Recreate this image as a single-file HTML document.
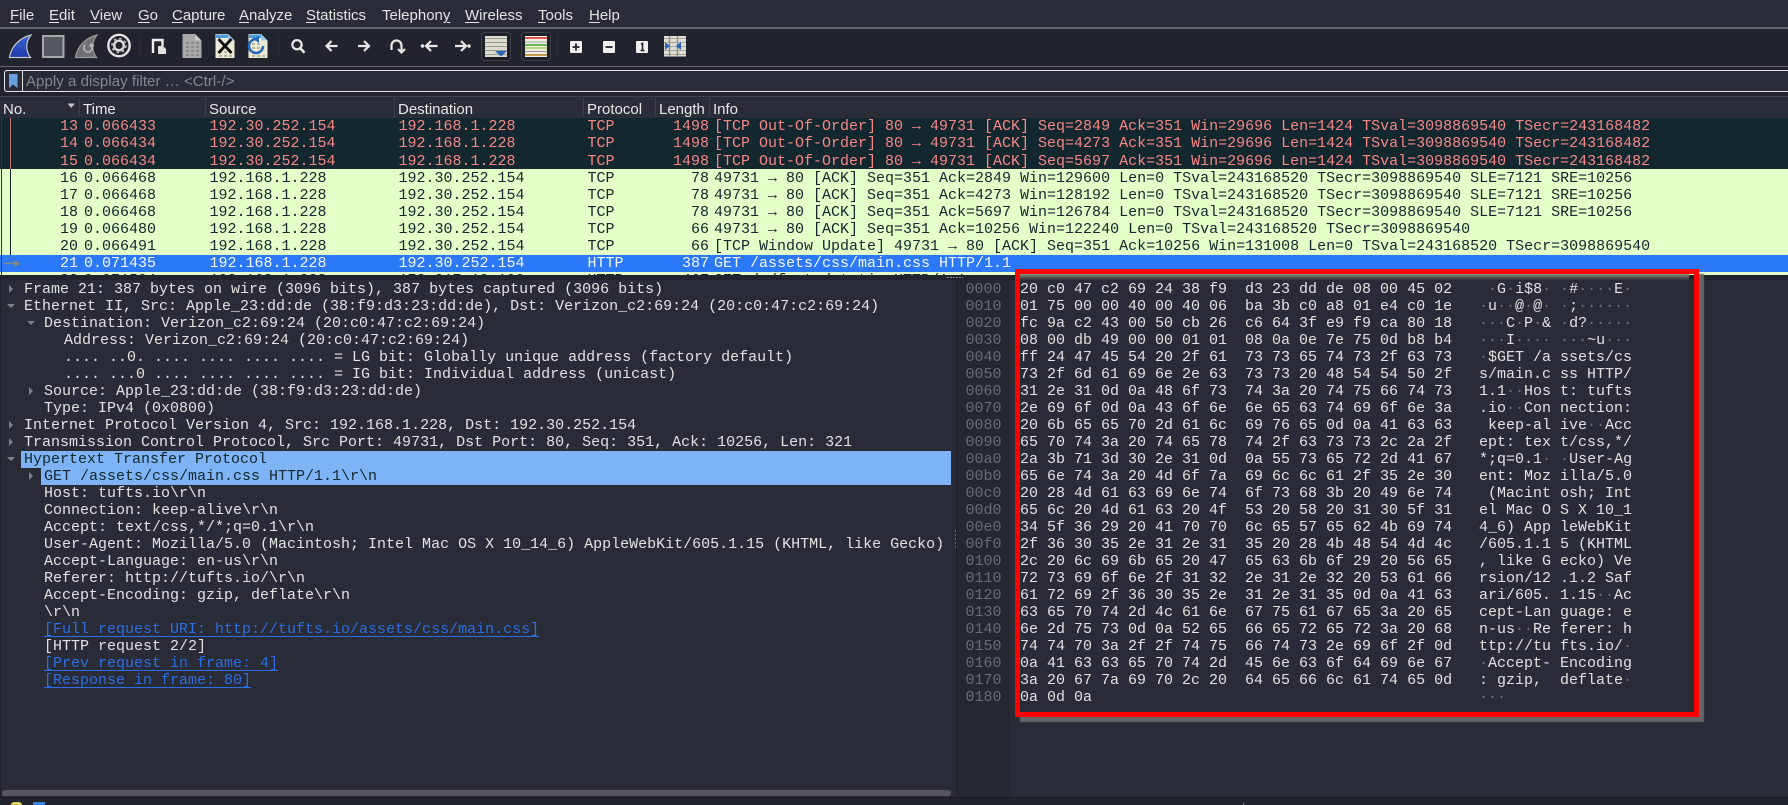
<!DOCTYPE html>
<html><head><meta charset="utf-8"><title>Wireshark</title>
<style>
html{margin:0;padding:0;width:1788px;height:805px;overflow:hidden;background:#292c36;}
body{margin:0;padding:0;background:#292c36;position:relative;width:1788px;height:805px;overflow:hidden;font-family:"Liberation Sans",sans-serif;font-size:15px;color:#e6e6e6;}
#root{position:absolute;left:0;top:0;width:1788px;height:805px;overflow:hidden;}
.a{position:absolute;}
.m{position:absolute;top:7px;line-height:18px;color:#e4e4e4;white-space:pre;}
.m u{text-decoration-thickness:1px;text-underline-offset:2px;}
.h{position:absolute;top:100px;line-height:20px;color:#e8e8e8;white-space:pre;}
.hs{position:absolute;top:98px;width:1px;height:19px;background:#3e414c;}
.r{position:absolute;left:0;width:1788px;height:17px;line-height:17px;font-family:"Liberation Mono",monospace;font-size:15px;white-space:pre;overflow:hidden;}
.r span{position:absolute;top:0;}
.r.o1 span{top:1px;}
.n{right:1710px;text-align:right;}
.t{left:84px;}.s{left:209.5px;}.d{left:398.5px;}.p{left:587.5px;}
.l{right:1079px;text-align:right;}
.i{left:714px;}
.bad{background:#12272e;color:#f78787;}
.ok{background:#e4ffc7;color:#12272e;}
.sel{background:#2b78f8;color:#f4f8ff;}
.tr{position:absolute;left:0;width:951px;height:18px;line-height:17px;font-family:"Liberation Mono",monospace;font-size:15px;white-space:pre;overflow:hidden;color:#e2e2e2;}
.tr b{font-weight:normal;position:absolute;top:1px;}
.l0{left:24px;}.l1{left:44px;}.l2{left:64px;}
.tri{position:absolute;width:0;height:0;}
.rt{top:5px;border-left:4px solid #7d8088;border-top:4px solid transparent;border-bottom:4px solid transparent;}
.dn{top:7px;border-top:4px solid #7d8088;border-left:4px solid transparent;border-right:4px solid transparent;}
.tr b.lk{color:#2c6ee6;border-bottom:1px solid #2c6ee6;height:15px;line-height:17px;}
pre{margin:0;font-family:"Liberation Mono",monospace;font-size:15px;line-height:17px;position:absolute;}
#asc i{font-style:normal;color:#6f727a;}
</style></head><body><div id="root">

<!-- menu -->
<div class="a" style="left:0;top:0;width:1788px;height:28px;background:#292c36;"></div>
<div class="m" style="left:10px"><u>F</u>ile</div>
<div class="m" style="left:49px"><u>E</u>dit</div>
<div class="m" style="left:90px"><u>V</u>iew</div>
<div class="m" style="left:138px"><u>G</u>o</div>
<div class="m" style="left:172px"><u>C</u>apture</div>
<div class="m" style="left:239px"><u>A</u>nalyze</div>
<div class="m" style="left:306px"><u>S</u>tatistics</div>
<div class="m" style="left:382px">Telephon<u>y</u></div>
<div class="m" style="left:465px"><u>W</u>ireless</div>
<div class="m" style="left:538px"><u>T</u>ools</div>
<div class="m" style="left:589px"><u>H</u>elp</div>

<!-- toolbar -->
<div class="a" style="left:0;top:27px;width:1788px;height:2px;background:#63656f;"></div>
<div class="a" style="left:0;top:29px;width:1788px;height:37px;background:#21242c;"></div>
<div class="a" style="left:0;top:66px;width:1788px;height:1px;background:#63656f;"></div>
<svg class="a" style="left:0;top:0" width="720" height="70" viewBox="0 0 720 70">
<defs><linearGradient id="bf" x1="0" y1="0" x2="0" y2="1"><stop offset="0" stop-color="#3f66d8"/><stop offset="1" stop-color="#1d3aa8"/></linearGradient></defs>
<path d="M9.5 57.5C11 47 19 38 31 35C26 41 25 50 30.5 57.5Z" fill="url(#bf)" stroke="#c8c8c8" stroke-width="1.2"/>
<rect x="43" y="36" width="20.5" height="21" fill="#55585f" stroke="#a8a8a8" stroke-width="2"/>
<path d="M75.5 57.5C77 47 85 38 97 35C92 41 91 50 96.5 57.5Z" fill="#6e7076" stroke="#9a9a9a" stroke-width="1.2"/>
<path d="M85 45c-2 3-1 7 3 7s5-4 3-7M90 47l1-3 3 2" fill="none" stroke="#b8b8b8" stroke-width="1.6"/>
<circle cx="119" cy="45.5" r="10.7" fill="none" stroke="#e2e2e2" stroke-width="2.4"/>
<circle cx="119" cy="45.5" r="4.8" fill="none" stroke="#dcdcdc" stroke-width="2.4"/>
<circle cx="119" cy="45.5" r="7" fill="none" stroke="#c8c8c8" stroke-width="1.6" stroke-dasharray="2.4 3.1"/>
<rect x="140" y="34" width="1" height="24" fill="#2c2f38"/>
<path d="M153 53V40H162.5V46" fill="none" stroke="#f0f0f0" stroke-width="2.4"/>
<path d="M158 46H163L166 49V54H158Z" fill="#e2e2e2"/>
<path d="M182.5 34H195L201.5 40.5V58H182.5Z" fill="#a9a9a9"/>
<path d="M195 34V40.5H201.5" fill="#c8c8c8"/>
<path d="M186 43h3m2 0h3m2 0h3M186 47h3m2 0h3m2 0h3M186 51h3m2 0h3m2 0h3M186 55h3m2 0h3m2 0h3" stroke="#8a8a8a" stroke-width="2"/>
<path d="M215.5 34H228L234.5 40.5V58H215.5Z" fill="#ecead8"/>
<path d="M216 34.5H228L230 38H216Z" fill="#4d9bd8"/>
<path d="M228 34V40.5H234.5Z" fill="#9cc8e8"/>
<path d="M219 52h3m2 0h3m2 0h3M219 56h3m2 0h3m2 0h3" stroke="#a8a890" stroke-width="1.6"/>
<path d="M218.5 39L231.5 53M231.5 39L218.5 53" stroke="#111" stroke-width="2.8"/>
<path d="M248.5 34H261L267.5 40.5V58H248.5Z" fill="#ecead8"/>
<path d="M249 34.5H261L263 38H249Z" fill="#4d9bd8"/>
<path d="M261 34V40.5H267.5Z" fill="#9cc8e8"/>
<path d="M252 44h3m2 0h3M252 48h3m2 0h3M252 52h3m2 0h3M252 56h3m2 0h3m2 0h3" stroke="#a8a890" stroke-width="1.6"/>
<path d="M256 39a7 7 0 1 0 7 7" fill="none" stroke="#2a68b8" stroke-width="2.6"/>
<path d="M253 39l6-3v7z" fill="#2a68b8"/>
<rect x="278" y="34" width="1" height="24" fill="#2c2f38"/>
<g fill="none" stroke="#e8e8e8" stroke-width="2.2">
<circle cx="297" cy="44.7" r="4.6"/><path d="M300.5 48.5L304.5 52.8" stroke-width="2.6"/>
<path d="M331.5 41l-5 5 5 5M326.5 46h11"/>
<path d="M364 41l5 5-5 5M358 46h11"/>
<path d="M391.5 50V45.5a5 5 0 0 1 10 0V52M398 49l3.5 3.5 3.5-3.5"/>
<path d="M431 41l-5 5 5 5M426 46h11.5"/>
<path d="M461 41l5 5-5 5M455 46h11"/>
</g>
<circle cx="422.5" cy="46" r="1.8" fill="#e8e8e8"/><circle cx="469" cy="46" r="1.8" fill="#e8e8e8"/>
<rect x="481.5" y="32.5" width="29" height="28" rx="3" fill="#1e2128" stroke="#3b3e49"/>
<rect x="485" y="36" width="22" height="21" fill="#dcdcd2"/>
<path d="M485 38.5h22M485 42.5h22M485 46.5h22M485 50.5h22M485 54.5h22" stroke="#9a9a92" stroke-width="1"/>
<path d="M495 51h12l-6 5.5Z" fill="#2f63b8"/>
<rect x="521.5" y="32.5" width="29" height="28" rx="3" fill="#1e2128" stroke="#3b3e49"/>
<rect x="525" y="36" width="22" height="21" fill="#efefe6"/>
<path d="M525 38h22" stroke="#e02020" stroke-width="1.4"/><path d="M525 42h22" stroke="#a8a8a8" stroke-width="1"/>
<path d="M525 45h22" stroke="#3aa828" stroke-width="1.4"/><path d="M525 48h22" stroke="#88c020" stroke-width="1"/>
<path d="M525 51.5h22" stroke="#9a9a9a" stroke-width="1"/><path d="M525 55h22" stroke="#b88420" stroke-width="1.4"/>
<rect x="557" y="34" width="1" height="24" fill="#2c2f38"/>
<rect x="570" y="41" width="12" height="12" rx="1" fill="#f0f0f0"/><path d="M572.5 47h7M576 43.5v7" stroke="#21242c" stroke-width="1.8"/>
<rect x="603" y="41" width="12" height="12" rx="1" fill="#f0f0f0"/><path d="M605.5 47h7" stroke="#21242c" stroke-width="1.8"/>
<rect x="636" y="41" width="12" height="12" rx="1" fill="#f0f0f0"/><path d="M641 44.5l1.5-1V50.5M640.5 50.5h4" fill="none" stroke="#21242c" stroke-width="1.6"/>
<rect x="664" y="36" width="22" height="20.5" fill="#dfdfd6"/>
<path d="M664 38.5h22M664 42.5h22M664 46.5h22M664 50.5h22M664 54.5h22" stroke="#a8a8a0" stroke-width="1"/>
<path d="M669.5 36v21M677.5 36v21" stroke="#8a8a8a" stroke-width="1.4"/>
<path d="M665 42v8l5-4ZM681 42v8l-5-4Z" fill="#2f63b8"/>
</svg>

<!-- filter -->
<div class="a" style="left:0;top:67px;width:1788px;height:31px;background:#21242c;"></div>
<div class="a" style="left:4px;top:70px;width:1790px;height:20px;border:1px solid #e8e8e8;border-radius:3px;background:#292c36;"></div>
<div class="a" style="left:22px;top:70px;width:1px;height:22px;background:#e8e8e8;"></div>
<svg class="a" style="left:8px;top:73px" width="11" height="16"><path d="M1 1H9.5V15L5.2 11.5 1 15Z" fill="#6a9fe2"/></svg>
<div class="a" style="left:26px;top:73px;line-height:18px;color:#85878e;white-space:pre;letter-spacing:.05px;">Apply a display filter … &lt;Ctrl-/&gt;</div>

<!-- list header -->
<div class="a" style="left:0;top:96px;width:1788px;height:1px;background:#3e414c;"></div>
<div class="a" style="left:0;top:97px;width:1788px;height:21px;background:#2a2d37;"></div>
<div class="h" style="left:3px">No.</div>
<svg class="a" style="left:67px;top:103px" width="9" height="6"><path d="M0.5 0.5H8L4.2 5Z" fill="#c4c4c4"/></svg>
<div class="hs" style="left:79px"></div><div class="h" style="left:83px">Time</div>
<div class="hs" style="left:205px"></div><div class="h" style="left:209px">Source</div>
<div class="hs" style="left:394px"></div><div class="h" style="left:398px">Destination</div>
<div class="hs" style="left:583px"></div><div class="h" style="left:587px">Protocol</div>
<div class="hs" style="left:655px"></div><div class="h" style="left:659px">Length</div>
<div class="hs" style="left:709px"></div><div class="h" style="left:713px">Info</div>

<!-- packet rows -->
<div class="r bad" style="top:118px"><span class="n">13</span><span class="t">0.066433</span><span class="s">192.30.252.154</span><span class="d">192.168.1.228</span><span class="p">TCP</span><span class="l">1498</span><span class="i">[TCP Out-Of-Order] 80 → 49731 [ACK] Seq=2849 Ack=351 Win=29696 Len=1424 TSval=3098869540 TSecr=243168482</span></div>
<div class="r bad" style="top:135px"><span class="n">14</span><span class="t">0.066434</span><span class="s">192.30.252.154</span><span class="d">192.168.1.228</span><span class="p">TCP</span><span class="l">1498</span><span class="i">[TCP Out-Of-Order] 80 → 49731 [ACK] Seq=4273 Ack=351 Win=29696 Len=1424 TSval=3098869540 TSecr=243168482</span></div>
<div class="r bad o1" style="top:152px"><span class="n">15</span><span class="t">0.066434</span><span class="s">192.30.252.154</span><span class="d">192.168.1.228</span><span class="p">TCP</span><span class="l">1498</span><span class="i">[TCP Out-Of-Order] 80 → 49731 [ACK] Seq=5697 Ack=351 Win=29696 Len=1424 TSval=3098869540 TSecr=243168482</span></div>
<div class="r ok o1" style="top:169px"><span class="n">16</span><span class="t">0.066468</span><span class="s">192.168.1.228</span><span class="d">192.30.252.154</span><span class="p">TCP</span><span class="l">78</span><span class="i">49731 → 80 [ACK] Seq=351 Ack=2849 Win=129600 Len=0 TSval=243168520 TSecr=3098869540 SLE=7121 SRE=10256</span></div>
<div class="r ok o1" style="top:186px"><span class="n">17</span><span class="t">0.066468</span><span class="s">192.168.1.228</span><span class="d">192.30.252.154</span><span class="p">TCP</span><span class="l">78</span><span class="i">49731 → 80 [ACK] Seq=351 Ack=4273 Win=128192 Len=0 TSval=243168520 TSecr=3098869540 SLE=7121 SRE=10256</span></div>
<div class="r ok o1" style="top:203px"><span class="n">18</span><span class="t">0.066468</span><span class="s">192.168.1.228</span><span class="d">192.30.252.154</span><span class="p">TCP</span><span class="l">78</span><span class="i">49731 → 80 [ACK] Seq=351 Ack=5697 Win=126784 Len=0 TSval=243168520 TSecr=3098869540 SLE=7121 SRE=10256</span></div>
<div class="r ok o1" style="top:220px"><span class="n">19</span><span class="t">0.066480</span><span class="s">192.168.1.228</span><span class="d">192.30.252.154</span><span class="p">TCP</span><span class="l">66</span><span class="i">49731 → 80 [ACK] Seq=351 Ack=10256 Win=122240 Len=0 TSval=243168520 TSecr=3098869540</span></div>
<div class="r ok o1" style="top:237px;height:18px"><span class="n">20</span><span class="t">0.066491</span><span class="s">192.168.1.228</span><span class="d">192.30.252.154</span><span class="p">TCP</span><span class="l">66</span><span class="i">[TCP Window Update] 49731 → 80 [ACK] Seq=351 Ack=10256 Win=131008 Len=0 TSval=243168520 TSecr=3098869540</span></div>
<div class="r sel" style="top:255px"><span class="n">21</span><span class="t">0.071435</span><span class="s">192.168.1.228</span><span class="d">192.30.252.154</span><span class="p">HTTP</span><span class="l">387</span><span class="i">GET /assets/css/main.css HTTP/1.1</span></div>
<div class="r ok" style="top:272px;height:3px"><span class="n">22</span><span class="t">0.071504</span><span class="s">192.168.1.228</span><span class="d">172.217.10.100</span><span class="p">HTTP</span><span class="l">467</span><span class="i">GET /s/fonts/static HTTP/1.1</span></div>
<div class="a" style="left:10px;top:118px;width:1px;height:51px;background:#c87878;"></div>
<div class="a" style="left:10px;top:169px;width:1px;height:86px;background:#12272e;"></div>
<div class="a" style="left:1px;top:118px;width:1px;height:157px;background:#33363f;"></div>
<svg class="a" style="left:2px;top:255px" width="19" height="17"><path d="M1 8.5H16M13 6l4 2.5-4 2.5Z" stroke="#8a8a78" stroke-width="1.2" fill="#8a8a78"/></svg>

<!-- splitter -->
<div class="a" style="left:0;top:275px;width:1788px;height:5px;background:#21242c;"></div>
<div class="a" style="left:947px;top:277px;width:16px;height:1px;background:repeating-linear-gradient(90deg,#8a8a8a 0 2px,transparent 2px 3px);"></div>

<!-- tree -->
<div class="a" style="left:0;top:280px;width:951px;height:510px;background:#292c36;"></div>
<div class="a" style="left:0;top:280px;width:1px;height:517px;background:#1e2128;"></div>
<div class="a" style="left:21px;top:451px;width:930px;height:17px;background:#7eb4f5;"></div>
<div class="a" style="left:41px;top:468px;width:910px;height:17px;background:#7eb4f5;"></div>

<div class="tr" style="top:280px"><i class="tri rt" style="left:9px"></i><b class="l0">Frame 21: 387 bytes on wire (3096 bits), 387 bytes captured (3096 bits)</b></div>
<div class="tr" style="top:297px"><i class="tri dn" style="left:7px"></i><b class="l0">Ethernet II, Src: Apple_23:dd:de (38:f9:d3:23:dd:de), Dst: Verizon_c2:69:24 (20:c0:47:c2:69:24)</b></div>
<div class="tr" style="top:314px"><i class="tri dn" style="left:27px"></i><b class="l1">Destination: Verizon_c2:69:24 (20:c0:47:c2:69:24)</b></div>
<div class="tr" style="top:331px"><b class="l2">Address: Verizon_c2:69:24 (20:c0:47:c2:69:24)</b></div>
<div class="tr" style="top:348px"><b class="l2">.... ..0. .... .... .... .... = LG bit: Globally unique address (factory default)</b></div>
<div class="tr" style="top:365px"><b class="l2">.... ...0 .... .... .... .... = IG bit: Individual address (unicast)</b></div>
<div class="tr" style="top:382px"><i class="tri rt" style="left:29px"></i><b class="l1">Source: Apple_23:dd:de (38:f9:d3:23:dd:de)</b></div>
<div class="tr" style="top:399px"><b class="l1">Type: IPv4 (0x0800)</b></div>
<div class="tr" style="top:416px"><i class="tri rt" style="left:9px"></i><b class="l0">Internet Protocol Version 4, Src: 192.168.1.228, Dst: 192.30.252.154</b></div>
<div class="tr" style="top:433px"><i class="tri rt" style="left:9px"></i><b class="l0">Transmission Control Protocol, Src Port: 49731, Dst Port: 80, Seq: 351, Ack: 10256, Len: 321</b></div>
<div class="tr" style="top:450px"><i class="tri dn" style="left:7px"></i><b class="l0" style="color:#12272e">Hypertext Transfer Protocol</b></div>
<div class="tr" style="top:467px"><i class="tri rt" style="left:29px"></i><b class="l1" style="color:#12272e">GET /assets/css/main.css HTTP/1.1\r\n</b></div>
<div class="tr" style="top:484px"><b class="l1">Host: tufts.io\r\n</b></div>
<div class="tr" style="top:501px"><b class="l1">Connection: keep-alive\r\n</b></div>
<div class="tr" style="top:518px"><b class="l1">Accept: text/css,*/*;q=0.1\r\n</b></div>
<div class="tr" style="top:535px"><b class="l1">User-Agent: Mozilla/5.0 (Macintosh; Intel Mac OS X 10_14_6) AppleWebKit/605.1.15 (KHTML, like Gecko) Version/12.1.2 Safari/605.1.15\r\n</b></div>
<div class="tr" style="top:552px"><b class="l1">Accept-Language: en-us\r\n</b></div>
<div class="tr" style="top:569px"><b class="l1">Referer: http://tufts.io/\r\n</b></div>
<div class="tr" style="top:586px"><b class="l1">Accept-Encoding: gzip, deflate\r\n</b></div>
<div class="tr" style="top:603px"><b class="l1">\r\n</b></div>
<div class="tr" style="top:620px"><b class="l1 lk">[Full request URI: http://tufts.io/assets/css/main.css]</b></div>
<div class="tr" style="top:637px"><b class="l1">[HTTP request 2/2]</b></div>
<div class="tr" style="top:654px"><b class="l1 lk">[Prev request in frame: 4]</b></div>
<div class="tr" style="top:671px"><b class="l1 lk">[Response in frame: 80]</b></div>

<div class="a" style="left:2px;top:790px;width:949px;height:6px;border-radius:3px;background:#55575c;"></div>

<!-- hex pane -->
<div class="a" style="left:951px;top:280px;width:5px;height:517px;background:#292c36;"></div>
<div class="a" style="left:956px;top:280px;width:1px;height:517px;background:#1e2128;"></div>
<div class="a" style="left:957px;top:280px;width:53px;height:517px;background:#252831;"></div>
<div class="a" style="left:1010px;top:280px;width:778px;height:517px;background:#292c36;"></div>
<div class="a" style="left:955px;top:530px;width:1px;height:18px;background:repeating-linear-gradient(0deg,#6a6a6a 0 2px,transparent 2px 4px);"></div>

<!-- red rectangle -->
<div class="a" style="left:1015px;top:269px;width:674px;height:438px;border:5px solid #f00;box-shadow:5px 5px 1px #66676a;"></div>
<div class="a" style="left:1020px;top:274px;width:669px;height:6px;background:linear-gradient(#8a8a76,rgba(70,72,80,.35));"></div>

<pre class="a" style="left:965.5px;top:281px;color:#696c74">0000
0010
0020
0030
0040
0050
0060
0070
0080
0090
00a0
00b0
00c0
00d0
00e0
00f0
0100
0110
0120
0130
0140
0150
0160
0170
0180</pre>
<pre class="a" style="left:1020px;top:281px;color:#e2e2e2">20 c0 47 c2 69 24 38 f9  d3 23 dd de 08 00 45 02
01 75 00 00 40 00 40 06  ba 3b c0 a8 01 e4 c0 1e
fc 9a c2 43 00 50 cb 26  c6 64 3f e9 f9 ca 80 18
08 00 db 49 00 00 01 01  08 0a 0e 7e 75 0d b8 b4
ff 24 47 45 54 20 2f 61  73 73 65 74 73 2f 63 73
73 2f 6d 61 69 6e 2e 63  73 73 20 48 54 54 50 2f
31 2e 31 0d 0a 48 6f 73  74 3a 20 74 75 66 74 73
2e 69 6f 0d 0a 43 6f 6e  6e 65 63 74 69 6f 6e 3a
20 6b 65 65 70 2d 61 6c  69 76 65 0d 0a 41 63 63
65 70 74 3a 20 74 65 78  74 2f 63 73 73 2c 2a 2f
2a 3b 71 3d 30 2e 31 0d  0a 55 73 65 72 2d 41 67
65 6e 74 3a 20 4d 6f 7a  69 6c 6c 61 2f 35 2e 30
20 28 4d 61 63 69 6e 74  6f 73 68 3b 20 49 6e 74
65 6c 20 4d 61 63 20 4f  53 20 58 20 31 30 5f 31
34 5f 36 29 20 41 70 70  6c 65 57 65 62 4b 69 74
2f 36 30 35 2e 31 2e 31  35 20 28 4b 48 54 4d 4c
2c 20 6c 69 6b 65 20 47  65 63 6b 6f 29 20 56 65
72 73 69 6f 6e 2f 31 32  2e 31 2e 32 20 53 61 66
61 72 69 2f 36 30 35 2e  31 2e 31 35 0d 0a 41 63
63 65 70 74 2d 4c 61 6e  67 75 61 67 65 3a 20 65
6e 2d 75 73 0d 0a 52 65  66 65 72 65 72 3a 20 68
74 74 70 3a 2f 2f 74 75  66 74 73 2e 69 6f 2f 0d
0a 41 63 63 65 70 74 2d  45 6e 63 6f 64 69 6e 67
3a 20 67 7a 69 70 2c 20  64 65 66 6c 61 74 65 0d
0a 0d 0a</pre>
<pre id="asc" class="a" style="left:1479px;top:281px;color:#e2e2e2"> <i>·</i>G<i>·</i>i$8<i>·</i> <i>·</i>#<i>····</i>E<i>·</i>
<i>·</i>u<i>··</i>@<i>·</i>@<i>·</i> <i>·</i>;<i>······</i>
<i>···</i>C<i>·</i>P<i>·</i>&amp; <i>·</i>d?<i>·····</i>
<i>···</i>I<i>····</i> <i>···</i>~u<i>···</i>
<i>·</i>$GET /a ssets/cs
s/main.c ss HTTP/
1.1<i>··</i>Hos t: tufts
.io<i>··</i>Con nection:
 keep-al ive<i>··</i>Acc
ept: tex t/css,*/
*;q=0.1<i>·</i> <i>·</i>User-Ag
ent: Moz illa/5.0
 (Macint osh; Int
el Mac O S X 10_1
4_6) App leWebKit
/605.1.1 5 (KHTML
, like G ecko) Ve
rsion/12 .1.2 Saf
ari/605. 1.15<i>··</i>Ac
cept-Lan guage: e
n-us<i>··</i>Re ferer: h
ttp://tu fts.io/<i>·</i>
<i>·</i>Accept- Encoding
: gzip,  deflate<i>·</i>
<i>···</i></pre>

<!-- status bar -->
<div class="a" style="left:0;top:797px;width:1788px;height:8px;background:#21242c;"></div>
<div class="a" style="left:0;top:797px;width:1788px;height:1px;background:#1a1c22;"></div>
<div class="a" style="left:11px;top:802px;width:11px;height:3px;border-radius:6px 6px 0 0;background:#d8d060;"></div>
<div class="a" style="left:33px;top:802px;width:12px;height:3px;background:#3a82d8;"></div>
<div class="a" style="left:1243px;top:803px;width:1px;height:2px;background:#8a8a8a;"></div>
</div></body></html>
